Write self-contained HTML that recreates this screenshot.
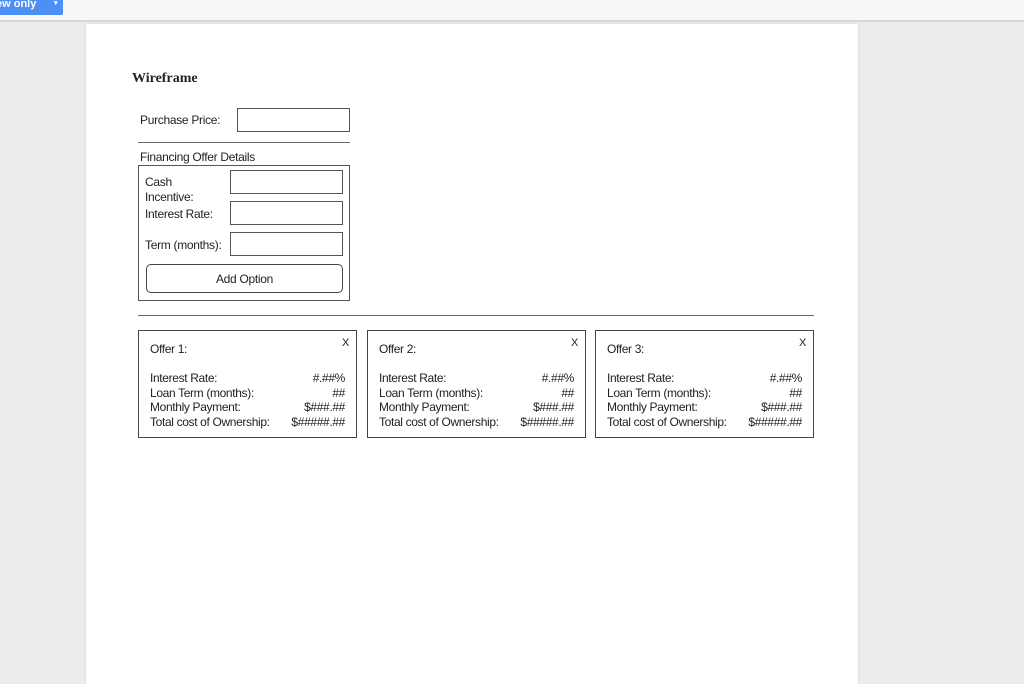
<!DOCTYPE html><html><head><style>
body{margin:0;width:1024px;height:682px;background:#ececec;position:relative;overflow:hidden;font-family:"Liberation Sans",Arial,sans-serif;color:#222}
.a{position:absolute}
.t{font-size:12px;line-height:14px;letter-spacing:-0.3px}
.box{position:absolute;border:1px solid #555;background:#fff;box-sizing:border-box}
.off{position:absolute;border:1px solid #444;box-sizing:border-box;width:219px;height:108px;top:330px;font-size:12px;line-height:14.5px;letter-spacing:-0.35px}
.off .h{position:absolute;left:11px;top:11px}
.off .x{position:absolute;right:7px;top:5px;font-size:11px}
.off .l{position:absolute;left:11px;top:40px}
.off .r{position:absolute;right:11px;top:40px;text-align:right}
</style></head><body>
<div class="a" style="left:0;top:0;width:1024px;height:20px;background:#f8f8f8"></div>
<div class="a" style="left:0;top:20px;width:1024px;height:2px;background:#d6d6d6"></div>
<div class="a" style="left:0;top:0;width:63px;height:15px;background:#4d8ff5;border-radius:0 0 2px 0;color:#fff;font-size:11px;font-weight:bold;line-height:8px;overflow:hidden"><span style="margin-left:-4px">ew only</span><span style="position:absolute;left:54px;top:0;font-size:7px">▾</span></div>
<div class="a" style="left:86px;top:24px;width:772px;height:660px;background:#fff;box-shadow:0 0 2px #ccc"></div>
<div class="a" style="left:132px;top:71px;font-family:'Liberation Serif',serif;font-weight:bold;font-size:14px">Wireframe</div>
<div class="a t" style="left:140px;top:113px">Purchase Price:</div>
<div class="box" style="left:237px;top:108px;width:113px;height:24px"></div>
<div class="a" style="left:138px;top:142px;width:212px;height:1px;background:#666"></div>
<div class="a t" style="left:140px;top:150px">Financing Offer Details</div>
<div class="box" style="left:138px;top:165px;width:212px;height:136px"></div>
<div class="a t" style="left:145px;top:175px;line-height:15px">Cash<br>Incentive:</div>
<div class="box" style="left:230px;top:170px;width:113px;height:24px"></div>
<div class="a t" style="left:145px;top:207px">Interest Rate:</div>
<div class="box" style="left:230px;top:201px;width:113px;height:24px"></div>
<div class="a t" style="left:145px;top:238px">Term (months):</div>
<div class="box" style="left:230px;top:232px;width:113px;height:24px"></div>
<div class="box" style="left:146px;top:264px;width:197px;height:29px;border-radius:5px;border-color:#444;text-align:center;font-size:12px;letter-spacing:-0.3px;line-height:28px">Add Option</div>
<div class="a" style="left:138px;top:315px;width:676px;height:1px;background:#666"></div>
<div class="off" style="left:138px"><div class="h">Offer 1:</div><div class="x">X</div><div class="l">Interest Rate:<br>Loan Term (months):<br>Monthly Payment:<br>Total cost of Ownership:</div><div class="r">#.##%<br>##<br>$###.##<br>$#####.##</div></div>
<div class="off" style="left:367px"><div class="h">Offer 2:</div><div class="x">X</div><div class="l">Interest Rate:<br>Loan Term (months):<br>Monthly Payment:<br>Total cost of Ownership:</div><div class="r">#.##%<br>##<br>$###.##<br>$#####.##</div></div>
<div class="off" style="left:595px"><div class="h">Offer 3:</div><div class="x">X</div><div class="l">Interest Rate:<br>Loan Term (months):<br>Monthly Payment:<br>Total cost of Ownership:</div><div class="r">#.##%<br>##<br>$###.##<br>$#####.##</div></div>
</body></html>
